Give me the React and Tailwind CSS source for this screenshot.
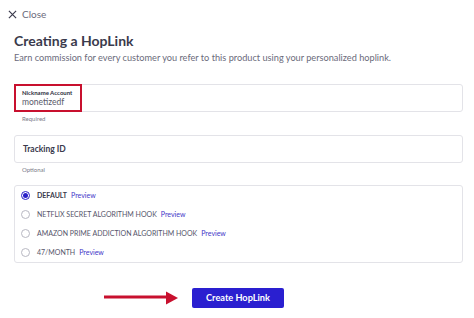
export default function App() {
  const options = [
    { label: "DEFAULT", checked: true },
    { label: "NETFLIX SECRET ALGORITHM HOOK" },
    { label: "AMAZON PRIME ADDICTION ALGORITHM HOOK" },
    { label: "47/MONTH" },
  ];

  return (
    <div
      className="h-[318px] w-[474px] overflow-hidden bg-white text-[#3a3a4c]"
      style={{ fontFamily: "Lato, 'Open Sans', sans-serif" }}
    >
      <div className="flex items-center gap-[5px] pl-[8px] pt-[8px] text-[10px] leading-[12px] text-[#6b6b7b]">
        <svg className="h-[9px] w-[9px]" viewBox="0 0 10 10" fill="none" stroke="#3a3a4c" strokeWidth="1.3" aria-hidden>
          <path d="M1 1l8 8M9 1l-8 8" />
        </svg>
        <span>Close</span>
      </div>

      <div className="px-[14px]">
        <h1 className="mt-[12px] text-[14px] font-bold leading-[17px] text-[#3a3a4c]">Creating a HopLink</h1>
        <p className="mt-[3px] text-[9.2px] leading-[11px] text-[#6b6b7b]">
          Earn commission for every customer you refer to this product using your personalized hoplink.
        </p>

        <div className="mt-[21px] h-[28px] w-[449px] rounded-[3px] border border-[#e3e3e8]">
          <div className="-ml-px -mt-px flex h-[28px] w-[68px] flex-col justify-center border-2 border-[#c8102e] pl-[6px]">
            <div className="text-[6px] font-bold leading-[8px] text-[#2e2e3e]">Nickname Account</div>
            <div className="text-[8.5px] leading-[11px] text-[#5a5a6a]">monetizedf</div>
          </div>
        </div>
        <div className="ml-[8px] mt-[3px] text-[6px] leading-[8px] text-[#7a7a88]">Required</div>

        <div className="mt-[12px] flex h-[28px] w-[449px] items-center rounded-[3px] border border-[#e3e3e8] pl-[8px]">
          <span className="text-[8.5px] font-bold text-[#3a3a4c]">Tracking ID</span>
        </div>
        <div className="ml-[8px] mt-[3px] text-[6px] leading-[8px] text-[#7a7a88]">Optional</div>

        <div className="mt-[11px] flex h-[78px] w-[449px] flex-col justify-center gap-[10px] rounded-[3px] border border-[#e3e3e8] pl-[6px]">
          {options.map((o) => (
            <div key={o.label} className="flex items-center leading-[9px]">
              {o.checked ? (
                <span className="flex h-[9px] w-[9px] items-center justify-center rounded-full border border-[#2a20c8]">
                  <span className="h-[5px] w-[5px] rounded-full bg-[#2a20c8]" />
                </span>
              ) : (
                <span className="h-[9px] w-[9px] rounded-full border border-[#b8b8c2]" />
              )}
              <span className={`ml-[7px] text-[7px] ${o.checked ? "font-bold text-[#3a3a4c]" : "text-[#55556a]"}`}>{o.label}</span>
              <span className="ml-[4px] text-[7px] text-[#3f36c8]">Preview</span>
            </div>
          ))}
        </div>
      </div>

      <div className="mt-[25px] flex items-center">
        <svg className="ml-[104px] h-[14px] w-[74px]" viewBox="0 0 74 14" aria-hidden>
          <path d="M0 6h64V6.2" stroke="#c8102e" strokeWidth="3" />
          <path d="M62 0.5L74 7 62 13.5z" fill="#c8102e" />
        </svg>
        <button
          type="button"
          className="ml-[14px] h-[20px] w-[92px] rounded-[2px] bg-[#2a1fd0] text-[9.2px] font-bold text-white"
        >
          Create HopLink
        </button>
      </div>
    </div>
  );
}
